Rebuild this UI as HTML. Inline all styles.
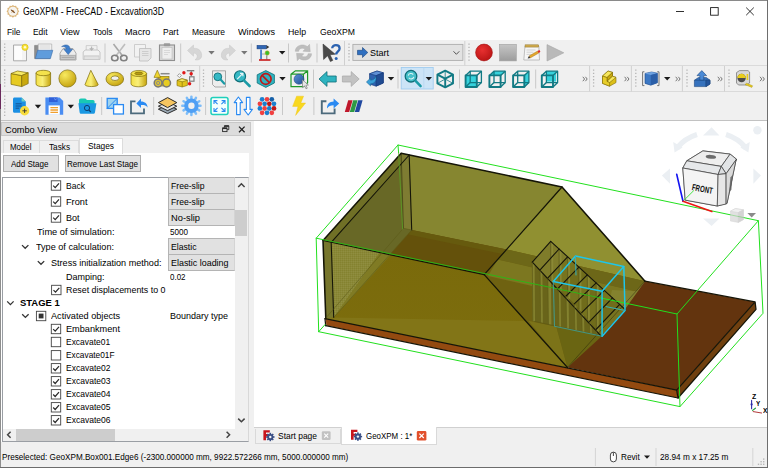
<!DOCTYPE html>
<html><head><meta charset="utf-8"><title>GeoXPM - FreeCAD - Excavation3D</title>
<style>
html,body{margin:0;padding:0;}
body{width:768px;height:468px;position:relative;overflow:hidden;background:#f0f0f0;font-family:"Liberation Sans",sans-serif;}
.a{position:absolute;box-sizing:border-box;}
.t{position:absolute;white-space:nowrap;transform-origin:0 50%;line-height:14px;height:14px;font-family:"Liberation Sans",sans-serif;}
svg{position:absolute;left:0;top:0;overflow:visible;}
</style></head><body>
<!-- window frame / title / menu -->
<div class="a" style="left:0;top:0;width:768px;height:40px;background:#fff;"></div>
<div class="a" style="left:0;top:0;width:768px;height:1px;background:#8a8a8a;"></div>
<!-- toolbar row separators -->
<div class="a" style="left:0;top:65px;width:768px;height:1px;background:#dadada;"></div>
<div class="a" style="left:0;top:91px;width:768px;height:1px;background:#dadada;"></div>
<div class="a" style="left:0;top:120px;width:768px;height:1px;background:#c2c2c2;"></div>
<!-- combo view dock -->
<div class="a" style="left:1px;top:122px;width:250px;height:14px;background:#dcdcdc;border:1px solid #c8c8c8;"></div>
<!-- tab widget -->
<div class="a" style="left:3px;top:140px;width:37px;height:13px;background:#f0f0f0;border:1px solid #dcdcdc;border-bottom:none;"></div>
<div class="a" style="left:40px;top:140px;width:39px;height:13px;background:#f0f0f0;border:1px solid #dcdcdc;border-left:none;border-bottom:none;"></div>
<div class="a" style="left:1px;top:153px;width:248px;height:289px;background:#fff;"></div>
<div class="a" style="left:79px;top:138px;width:44px;height:16px;background:#fff;border:1px solid #dcdcdc;border-bottom:none;"></div>
<!-- buttons -->
<div class="a" style="left:3px;top:155px;width:56px;height:17px;background:#e1e1e1;border:1px solid #adadad;"></div>
<div class="a" style="left:65px;top:155px;width:76px;height:17px;background:#e1e1e1;border:1px solid #adadad;"></div>
<!-- tree frame -->
<div class="a" style="left:2px;top:177px;width:247px;height:265px;background:#fff;border:1px solid #9a9ea4;border-right-color:#d8d8d8;"></div>
<!-- combos in tree -->
<div class="a" style="left:168px;top:177px;width:67px;height:17px;background:#e1e1e1;border:1px solid #b4b4b4;border-right-color:#d4d4d4;"></div>
<div class="a" style="left:168px;top:193px;width:67px;height:17px;background:#e1e1e1;border:1px solid #b4b4b4;border-right-color:#d4d4d4;"></div>
<div class="a" style="left:168px;top:209px;width:67px;height:17px;background:#e1e1e1;border:1px solid #b4b4b4;border-right-color:#d4d4d4;"></div>
<div class="a" style="left:168px;top:238px;width:67px;height:17px;background:#e1e1e1;border:1px solid #b4b4b4;border-right-color:#d4d4d4;"></div>
<div class="a" style="left:168px;top:254px;width:67px;height:17px;background:#e1e1e1;border:1px solid #b4b4b4;border-right-color:#d4d4d4;"></div>
<!-- v scrollbar -->
<div class="a" style="left:235px;top:178px;width:13px;height:251px;background:#f0f0f0;"></div>
<div class="a" style="left:235px;top:210px;width:12px;height:26px;background:#cdcdcd;"></div>
<!-- h scrollbar -->
<div class="a" style="left:3px;top:429px;width:232px;height:12px;background:#f0f0f0;"></div>
<div class="a" style="left:16px;top:429px;width:99px;height:12px;background:#cdcdcd;"></div>
<div class="a" style="left:235px;top:429px;width:13px;height:12px;background:#f0f0f0;"></div>
<!-- 3D view -->
<div class="a" style="left:254px;top:121px;width:513px;height:306px;background:#fff;"></div>
<!-- mdi tabs -->
<div class="a" style="left:254px;top:427px;width:514px;height:1px;background:#d0d0d0;"></div>
<div class="a" style="left:255px;top:429px;width:86px;height:15px;background:#f0f0f0;border:1px solid #d9d9d9;border-top:none;"></div>
<div class="a" style="left:341px;top:427px;width:96px;height:18px;background:#fff;border:1px solid #d9d9d9;border-top:none;"></div>
<!-- right window border -->
<div class="a" style="left:767px;top:0;width:1px;height:468px;background:#6e6e6e;"></div>
<div class="a" style="left:0;top:0;width:1px;height:468px;background:#8e8e8e;"></div>
<div class="a" style="left:0;top:84px;width:1px;height:25px;background:#6a2a5c;"></div>
<div class="a" style="left:0;top:467px;width:768px;height:1px;background:#6c6c6c;"></div>
<!--SVG3D--><svg width="768" height="468" viewBox="0 0 768 468">
<defs><pattern id="stp" width="2" height="2" patternUnits="userSpaceOnUse"><rect width="2" height="2" fill="#8a8838"/><rect width="1" height="1" fill="#84822f"/><rect x="1" y="1" width="1" height="1" fill="#908e40"/></pattern><linearGradient id="gfl" x1="0" y1="0" x2="0" y2="1"><stop offset="0" stop-color="#7a6a0b"/><stop offset="1" stop-color="#7d6e0e"/></linearGradient></defs>
<g stroke-linejoin="round" stroke-linecap="round">
<!-- brown slab -->
<polygon points="325.8,318.7 676.7,390.2 678,398 326.3,325.6" fill="#934a10"/>
<polygon points="676.7,390.2 755.1,301.9 756,309.4 678,398" fill="#70400f"/>
<polygon points="567.5,367.5 645,281.2 755.1,301.9 676.7,390.2" fill="#63340e"/>
<polygon points="323,240.5 401.2,153.2 562,187 645,281.2 567.5,367.5 325.8,318.7" fill="#7c761c"/>
<polygon points="331.2,242.3 409.2,155 562,187 484.2,274.7" fill="#77702a"/>
<!-- embankment: top face regions -->
<polygon points="323,240.5 401.2,153.2 409.2,155 331.2,242.5" fill="#707026"/>
<polygon points="331.2,242.3 409.2,155 411.7,230 390.3,254" fill="#686826"/>
<polygon points="409.2,155 562,187 506.6,249.4 411.7,230" fill="#868630"/>
<polygon points="401.2,153.2 409.2,155 411.7,230 403.4,228.3" fill="#7e7c32"/>
<polygon points="411.7,230 506.6,249.4 484.2,274.7 390.3,254" fill="#64510b"/>
<polygon points="411.7,230 506.6,249.4 502.4,254 408.4,234.6" fill="#665a0e"/>
<!-- front face regions -->
<polygon points="323,240.5 331.2,242.3 333.7,317.5 325.8,318.7" fill="#77762c"/>
<polygon points="331.2,242.3 380,252.3 333.7,317.5" fill="url(#stp)"/>
<polygon points="380,252.3 391,254.6 333.7,317.5" fill="#807b24"/>
<polygon points="391,254.6 484.2,274.7 567.5,367.5 325.8,318.7 333.7,317.5" fill="url(#gfl)"/>
<polygon points="333.7,317.5 534,321.3 567.5,367.5 325.8,318.7" fill="#827517"/>
<!-- slope face -->
<polygon points="562,187 645,281.2 506.6,249.4" fill="#909031"/>
<polygon points="506.6,249.4 645,281.2 567.5,367.5 484.2,274.7" fill="#6f6211"/>
<polygon points="528.2,320.8 556.4,326.8 567.5,367.5" fill="#7c7318"/>
<polygon points="556.4,326.8 602,336 567.5,367.5" fill="#6a6512"/>
<polygon points="497.7,259.4 636,291.2 622,306.6 488,276" fill="#7c7720"/>
<polygon points="506.6,249.4 645,281.2 636,291.2 497.7,259.4" fill="#6d6718"/>
<polygon points="600.9,335.8 625,309.3 645,281.2 636,291.2 612,290 " fill="#84822e"/>
</g>
<g><polygon points="532.3,262.2 550.7,241.3 559.1,249.0 540.1,269.8" fill="#7f7c2a"/><polygon points="540.1,269.8 559.1,249.0 567.6,256.8 547.9,277.8" fill="#7f7c2a"/><polygon points="547.9,277.8 567.6,256.8 578.9,267.1 558.3,288.2" fill="#77741f"/><polygon points="558.3,288.2 578.9,267.1 587.3,274.8 566.1,296.0" fill="#706c1b"/><polygon points="566.1,296.0 587.3,274.8 596.2,282.9 574.3,303.8" fill="#77741f"/><polygon points="574.3,303.8 596.2,282.9 604.2,290.3 581.7,312.7" fill="#706c1b"/><polygon points="581.7,312.7 604.2,290.3 612.5,297.9 589.4,321.6" fill="#77741f"/><polygon points="589.4,321.6 612.5,297.9 619.7,304.4 596.0,329.5" fill="#706c1b"/><polygon points="596.0,329.5 619.7,304.4 625.0,309.3 600.9,335.8" fill="#77741f"/></g>
<g><polygon points="550.7,241.3 553.1,243.5 553.3,283.3 550.9,280.6" fill="#8f8d3a" fill-opacity="0.75"/><line x1="550.7" y1="241.3" x2="550.9" y2="280.6" stroke="#4e4a12" stroke-width="0.7" stroke-opacity="0.8"/><polygon points="559.1,249.0 561.5,251.2 561.7,291.7 559.3,289.0" fill="#8f8d3a" fill-opacity="0.75"/><line x1="559.1" y1="249.0" x2="559.3" y2="289.0" stroke="#4e4a12" stroke-width="0.7" stroke-opacity="0.8"/><polygon points="567.6,256.8 570.0,259.0 570.2,300.1 567.8,297.4" fill="#8f8d3a" fill-opacity="0.75"/><line x1="567.6" y1="256.8" x2="567.8" y2="297.4" stroke="#4e4a12" stroke-width="0.7" stroke-opacity="0.8"/><polygon points="578.9,267.1 581.3,269.3 581.5,312.2 579.1,309.5" fill="#8f8d3a" fill-opacity="0.75"/><line x1="578.9" y1="267.1" x2="579.1" y2="309.5" stroke="#4e4a12" stroke-width="0.7" stroke-opacity="0.8"/><polygon points="587.3,274.8 589.7,277.0 589.9,322.1 587.5,319.4" fill="#8f8d3a" fill-opacity="0.75"/><line x1="587.3" y1="274.8" x2="587.5" y2="319.4" stroke="#4e4a12" stroke-width="0.7" stroke-opacity="0.8"/><polygon points="596.2,282.9 598.6,285.1 598.8,332.8 596.4,330.1" fill="#8f8d3a" fill-opacity="0.75"/><line x1="596.2" y1="282.9" x2="596.4" y2="330.1" stroke="#4e4a12" stroke-width="0.7" stroke-opacity="0.8"/></g>
<g><polygon points="532.3,262.2 540.1,269.8 540.5,322.6 532.7,320.9" fill="#69641a"/><polygon points="532.3,262.2 534.6,264.5 535.0,321.4 532.7,320.9" fill="#84822f"/><polygon points="540.1,269.8 547.9,277.8 548.3,324.3 540.5,322.6" fill="#69641a"/><polygon points="540.1,269.8 542.4,272.2 542.8,323.1 540.5,322.6" fill="#84822f"/><polygon points="547.9,277.8 558.3,288.2 558.7,326.6 548.3,324.3" fill="#69641a"/><polygon points="547.9,277.8 551.0,280.9 551.4,325.0 548.3,324.3" fill="#84822f"/><polygon points="558.3,288.2 566.1,296.0 566.5,328.3 558.7,326.6" fill="#69641a"/><polygon points="558.3,288.2 560.6,290.5 561.0,327.1 558.7,326.6" fill="#84822f"/><polygon points="566.1,296.0 574.3,303.8 574.7,330.0 566.5,328.3" fill="#69641a"/><polygon points="566.1,296.0 568.6,298.3 569.0,328.8 566.5,328.3" fill="#84822f"/><polygon points="574.3,303.8 581.7,312.7 582.1,331.7 574.7,330.0" fill="#69641a"/><polygon points="574.3,303.8 576.5,306.5 576.9,330.5 574.7,330.0" fill="#84822f"/><polygon points="581.7,312.7 589.4,321.6 589.8,333.3 582.1,331.7" fill="#69641a"/><polygon points="581.7,312.7 584.0,315.4 584.4,332.2 582.1,331.7" fill="#84822f"/><polygon points="589.4,321.6 596.0,329.5 596.4,334.8 589.8,333.3" fill="#69641a"/><polygon points="589.4,321.6 591.4,324.0 591.8,333.8 589.8,333.3" fill="#84822f"/><polygon points="596.0,329.5 600.9,335.8 601.3,335.8 596.4,334.8" fill="#69641a"/><polygon points="596.0,329.5 597.5,331.4 597.9,335.1 596.4,334.8" fill="#84822f"/></g>
<g fill="none" stroke="#15150a" stroke-width="1.1" stroke-linecap="round"><line x1="532.3" y1="262.2" x2="550.7" y2="241.3"/><line x1="540.1" y1="269.8" x2="559.1" y2="249.0"/><line x1="547.9" y1="277.8" x2="567.6" y2="256.8"/><line x1="558.3" y1="288.2" x2="578.9" y2="267.1"/><line x1="566.1" y1="296.0" x2="587.3" y2="274.8"/><line x1="574.3" y1="303.8" x2="596.2" y2="282.9"/><line x1="581.7" y1="312.7" x2="604.2" y2="290.3"/><line x1="589.4" y1="321.6" x2="612.5" y2="297.9"/><line x1="596.0" y1="329.5" x2="619.7" y2="304.4"/><line x1="532.3" y1="262.2" x2="600.9" y2="335.8"/><line x1="550.7" y1="241.3" x2="625.0" y2="309.3"/></g>
<g fill="none" stroke="#5a5614" stroke-width="0.7" stroke-opacity="0.8"><line x1="532.3" y1="262.2" x2="532.9" y2="320.9"/><line x1="540.1" y1="269.8" x2="540.7" y2="322.6"/><line x1="547.9" y1="277.8" x2="548.5" y2="324.3"/><line x1="558.3" y1="288.2" x2="558.9" y2="326.6"/><line x1="566.1" y1="296.0" x2="566.7" y2="328.3"/><line x1="574.3" y1="303.8" x2="574.9" y2="330.0"/><line x1="581.7" y1="312.7" x2="582.3" y2="331.7"/><line x1="589.4" y1="321.6" x2="590.0" y2="333.3"/><line x1="596.0" y1="329.5" x2="596.6" y2="334.8"/><line x1="534" y1="321.3" x2="600.9" y2="335.8"/></g>
<!-- edges -->
<g fill="none" stroke="#151508" stroke-width="1.25" stroke-linecap="round" stroke-linejoin="round">
<line x1="401.2" y1="153.2" x2="403.4" y2="228.3" stroke="#4a4a18" stroke-width="0.9"/>
<polyline points="325.8,318.7 323,240.5 401.2,153.2 562,187 645,281.2" stroke-width="1.55"/>
<polyline points="323,240.5 484.2,274.7 567.5,367.5"/>
<line x1="484.2" y1="274.7" x2="562" y2="187"/>
<polyline points="333.7,317.5 331.2,242.3 409.2,155 411.7,230" stroke-width="1.1"/>
<line x1="325" y1="318.7" x2="676.7" y2="390.2"/>
<polyline points="645,281.2 755.1,301.9 756,309.4 678,398 676.7,390.2 755.1,301.9"/>
<line x1="325.7" y1="325.7" x2="678" y2="398"/>
<line x1="325" y1="318.7" x2="325.7" y2="325.7"/>
<line x1="567.5" y1="367.5" x2="645" y2="281.2" stroke-width="0.7" stroke-opacity="0.55"/>
</g>
<g fill="none" stroke="#5c5a18" stroke-width="0.8" stroke-opacity="0.7"><line x1="326" y1="317.8" x2="403.4" y2="228.3"/><line x1="333.7" y1="317.5" x2="411.7" y2="230"/><line x1="403.4" y1="228.3" x2="411.7" y2="230"/></g>
<!-- green bounding box -->
<g fill="none" stroke="#22e01e" stroke-width="1" stroke-linecap="round">
<polyline points="318.7,331.7 316.2,238.2 398,145 758.4,220.7 763,313.3 680,406.6 318.7,331.7"/>
<polyline points="316.2,238.2 323.5,239.7"/><polyline points="323.5,239.7 600,297.8" stroke="#2fb416"/><polyline points="600,297.8 677,314 758.4,220.7"/>
<line x1="677" y1="314" x2="680" y2="406.6"/>
<line x1="318.7" y1="331.7" x2="325" y2="324.6"/>
<line x1="398" y1="145" x2="398.6" y2="152.6"/><line x1="398.6" y1="152.6" x2="402.6" y2="229" stroke="#58a626" stroke-opacity="0.75"/>
</g>
<!-- cyan selection box -->
<g fill="none" stroke="#1ec6ea" stroke-width="1.5" stroke-linecap="round" stroke-linejoin="round">
<polyline points="553.3,281.5 602.1,291.2 602.1,336.3"/>
<polyline points="553.3,281.5 575.5,256.1 623.8,266.5 625,310.5 602.1,336.3"/>
<line x1="602.1" y1="291.2" x2="623.8" y2="266.5"/>
<polyline points="553.3,281.5 554.5,326.2 602.1,336.3" stroke="#3aa8a8" stroke-width="1.1" stroke-opacity="0.75"/>
<line x1="575.5" y1="256.1" x2="576" y2="275" stroke="#35b0b8" stroke-width="1"/>
<line x1="606" y1="306.6" x2="625" y2="310.5" stroke="#35b0b8" stroke-width="1"/>
</g>
</svg><!--/SVG3D-->
<!--SVGUI--><svg width="768" height="468" viewBox="0 0 768 468">
<defs>
<linearGradient id="gy" x1="0" y1="0" x2="1" y2="1"><stop offset="0" stop-color="#f6e65a"/><stop offset="1" stop-color="#c9a80e"/></linearGradient>
<linearGradient id="gyh" x1="0" y1="0" x2="1" y2="0"><stop offset="0" stop-color="#f3df45"/><stop offset="0.45" stop-color="#f9ef7a"/><stop offset="1" stop-color="#c6a40e"/></linearGradient>
<radialGradient id="gys" cx="0.35" cy="0.3" r="0.8"><stop offset="0" stop-color="#f8ea60"/><stop offset="1" stop-color="#c19d08"/></radialGradient>
<radialGradient id="gred" cx="0.4" cy="0.35" r="0.7"><stop offset="0" stop-color="#e83030"/><stop offset="1" stop-color="#b81414"/></radialGradient>
<linearGradient id="gbl" x1="0" y1="0" x2="1" y2="1"><stop offset="0" stop-color="#5b93d6"/><stop offset="1" stop-color="#1f4f95"/></linearGradient>
<linearGradient id="ggr" x1="0" y1="0" x2="0" y2="1"><stop offset="0" stop-color="#c6c6c6"/><stop offset="1" stop-color="#9c9c9c"/></linearGradient>
</defs>
<line x1="4.7" y1="43.5" x2="4.7" y2="62.5" stroke="#b4b4b4" stroke-width="1.3" stroke-dasharray="1.3,1.9"/>
<g><path d="M13.5,45 H26.5 V60.8 H13.5 Z" fill="#f4f4f4" stroke="#9a9a9a" stroke-width="0.8"/><path d="M14.5,46 H22 V59.8 H14.5Z" fill="#fdfdfd"/><circle cx="25" cy="47.3" r="3.1" fill="#f7e23a" stroke="#d6b800" stroke-width="0.6"/><circle cx="25" cy="47.3" r="1.2" fill="#fffbd0"/></g>
<g><path d="M34.6,45.4 H40.5 L42,47 H50 V58.6 H34.6Z" fill="#8e8e8e" stroke="#6a6a6a" stroke-width="0.5"/><path d="M38.2,44 H51.7 V54 H38.2Z" fill="#f2f2f2" stroke="#a4a4a4" stroke-width="0.6"/><path d="M39.6,46 h10.6 M39.6,48 h10.6" stroke="#d2d2d2" stroke-width="0.8"/><path d="M35.4,58.6 L37.6,50.3 H52.8 L50.4,58.6Z" fill="#5f9cdc" stroke="#3a6fae" stroke-width="0.6"/></g>
<g><path d="M60,53.2 L63,48.6 H73 L76,53.2 V60 H60Z" fill="#ececec" stroke="#999" stroke-width="0.8"/><rect x="60.4" y="55.2" width="15.2" height="4.4" fill="#c8c8c8" stroke="#999" stroke-width="0.6"/><path d="M61.6,57.4 h12.8" stroke="#a8a8a8" stroke-width="1"/><path d="M61.6,46.6 C65.5,43.6 70.2,44.8 70,49.2 H72.6 L68.2,54.6 L63.8,49.2 H66.4 C66.4,47.4 64.4,46.2 61.6,46.6Z" fill="#3f7fcb" stroke="#2a5c9e" stroke-width="0.5"/></g>
<g><path d="M86.2,45.6 H97 V51.6 H86.2Z" fill="#f0f0f0" stroke="#c0c0c0" stroke-width="0.7"/><path d="M83.2,52 L85.2,50 H98 L100,52 V59.4 H83.2Z" fill="#f2f2f2" stroke="#bababa" stroke-width="0.8"/><path d="M84,55.6 h15.2" stroke="#cfcfcf" stroke-width="0.8"/><rect x="84.2" y="56.6" width="14.8" height="2.8" fill="#e2e2e2" stroke="#c2c2c2" stroke-width="0.5"/><path d="M91.6,46.6 v3.2 M89.8,48.2 l1.8,2 l1.8,-2" stroke="#b4b4b4" fill="none" stroke-width="1.1"/></g>
<line x1="105" y1="43.5" x2="105" y2="62.5" stroke="#c8c8c8" stroke-width="1"/>
<g fill="none" stroke="#808080"><path d="M113.5,44 L123,56.5" stroke="#a8a8a8" stroke-width="1.6"/><path d="M125,44 L115.5,56.5" stroke="#bdbdbd" stroke-width="1.6"/><ellipse cx="114.8" cy="58" rx="3.2" ry="2.7" stroke-width="1.6"/><ellipse cx="123.8" cy="58" rx="3.2" ry="2.7" stroke-width="1.6"/></g>
<g><path d="M134.5,44.5 H145.5 V57 H134.5Z" fill="#f2f2f2" stroke="#c4c4c4" stroke-width="0.8"/><path d="M139.5,48.5 H151 V58 L148,61 H139.5Z" fill="#e6e6e6" stroke="#bcbcbc" stroke-width="0.8"/><path d="M142,51.5 h6.5 M142,53.5 h6.5 M142,55.5 h6.5" stroke="#c6c6c6" stroke-width="0.8"/></g>
<g><rect x="159.5" y="45" width="15" height="15.5" fill="#d9d9d9" stroke="#8f8f8f" stroke-width="1.1"/><rect x="162" y="47.5" width="10" height="11.5" fill="#eeeeee" stroke="#b5b5b5" stroke-width="0.5"/><rect x="163.8" y="43.3" width="6.4" height="3" rx="0.8" fill="#9a9a9a"/><path d="M164,50.5 h6 M164,52.5 h6 M164,54.5 h4" stroke="#cfcfcf" stroke-width="0.7"/></g>
<line x1="180.7" y1="43.5" x2="180.7" y2="62.5" stroke="#c8c8c8" stroke-width="1"/>
<path d="M187.5,50.5 L193.5,45 V48.3 C199,48 202.5,51.5 201.5,57 C200.5,59.5 198,60.5 195,59.8 C198,58 198.5,53.5 193.5,53 V56.2Z" fill="#d6d6d6" stroke="#c6c6c6" stroke-width="0.5"/>
<polygon points="208.3,51.0 214.7,51.0 211.5,54.6" fill="#777"/>
<path d="M235.5,50.5 L229.5,45 V48.3 C224,48 220.5,51.5 221.5,57 C222.5,59.5 225,60.5 228,59.8 C225,58 224.5,53.5 229.5,53 V56.2Z" fill="#d6d6d6" stroke="#c6c6c6" stroke-width="0.5"/>
<polygon points="241.10000000000002,51.0 247.5,51.0 244.3,54.6" fill="#777"/>
<line x1="251.3" y1="43.5" x2="251.3" y2="62.5" stroke="#c8c8c8" stroke-width="1"/>
<g><rect x="257" y="45.3" width="9.5" height="3.6" fill="#2f66b5" stroke="#1b3f7a" stroke-width="0.5"/><path d="M266.5,45.3 L269.3,47.1 L266.5,48.9Z" fill="#333"/><rect x="260.2" y="49.5" width="1.7" height="10" fill="#3a76c8"/><circle cx="267.2" cy="53" r="2.2" fill="#36c02c" stroke="#e0a020" stroke-width="0.5"/><path d="M266.8,55.3 v4.2" stroke="#777" stroke-width="1"/><path d="M259,60 h11.5" stroke="#c81818" stroke-width="1.6"/><path d="M262,54 h3" stroke="#999" stroke-width="0.8"/></g>
<polygon points="279.0,51.0 285.4,51.0 282.2,54.6" fill="#1a1a1a"/>
<line x1="288.5" y1="43.5" x2="288.5" y2="62.5" stroke="#c8c8c8" stroke-width="1"/>
<g fill="#bdbdbd" stroke="#b0b0b0" stroke-width="0.4" transform="translate(303.4 52.5) scale(1.18) translate(-303.4 -52.5)"><path d="M296.5,51.5 C296.5,46.5 303,44.5 306.8,47.5 L308.6,45.6 L309.2,51.8 L303,51.4 L304.8,49.6 C302.6,48 299.6,49 299.4,51.5Z"/><path d="M310.3,53.5 C310.3,58.5 303.8,60.5 300,57.5 L298.2,59.4 L297.6,53.2 L303.8,53.6 L302,55.4 C304.2,57 307.2,56 307.4,53.5Z"/></g>
<line x1="317" y1="43.5" x2="317" y2="62.5" stroke="#c8c8c8" stroke-width="1"/>
<g><path d="M323,44 L323.6,59.5 L327.6,55.8 L330.4,61.6 L332.8,60.4 L330,54.8 L335.2,54.2Z" fill="#4a4a4a" stroke="#2e2e2e" stroke-width="0.5"/><path d="M332.2,48.2 C332.2,44.2 339.6,44.2 339.6,48.4 C339.6,51.4 336.2,51.2 336.2,54.6" fill="none" stroke="#2b62b0" stroke-width="2.3"/><circle cx="336.2" cy="58.6" r="1.5" fill="#2b62b0"/></g>
<line x1="344.5" y1="41" x2="344.5" y2="65.5" stroke="#d0d0d0" stroke-width="1"/>
<line x1="349" y1="43.5" x2="349" y2="62.5" stroke="#b4b4b4" stroke-width="1.3" stroke-dasharray="1.3,1.9"/>
<rect x="352.9" y="44.4" width="110" height="16" fill="#e2e2e2" stroke="#adadad" stroke-width="0.9"/>
<path d="M357.5,50.3 H362.5 V47.5 L367.8,52.5 L362.5,57.5 V54.7 H357.5Z" fill="#2f6fc0" stroke="#17437e" stroke-width="0.6"/>
<polyline points="453.5,51.3 456.4,54.3 459.3,51.3" fill="none" stroke="#444" stroke-width="0.9"/>
<line x1="464.8" y1="41" x2="464.8" y2="65.5" stroke="#d0d0d0" stroke-width="1"/>
<line x1="469" y1="43.5" x2="469" y2="62.5" stroke="#b4b4b4" stroke-width="1.3" stroke-dasharray="1.3,1.9"/>
<circle cx="484" cy="52.5" r="8.4" fill="url(#gred)" stroke="#a41010" stroke-width="0.6"/>
<rect x="499.5" y="44.3" width="16.8" height="16.6" fill="url(#ggr)" stroke="#a2a2a2" stroke-width="0.6"/>
<g><path d="M525,46 H538.8 L539.5,60 H523.8Z" fill="#f6f6f6" stroke="#a8a8a8" stroke-width="0.7"/><rect x="525" y="44.8" width="13.8" height="2.3" fill="#caa64a" stroke="#8d7430" stroke-width="0.4"/><path d="M526.5,50 h9 M526.5,52.2 h7 M526.5,54.4 h5" stroke="#c4c4c4" stroke-width="0.7"/><path d="M529,56 L537.6,51 L538.8,53 L530.2,58Z" fill="#e3a72c" stroke="#9a6a14" stroke-width="0.4"/><path d="M537.6,51 L539.4,50 L540.4,51.8 L538.8,53Z" fill="#e02828"/><path d="M529,56 L530.2,58 L527.6,58.4Z" fill="#333"/></g>
<path d="M547,44.6 L563.8,52.8 L547,61Z" fill="#b9b9b9" stroke="#a6a6a6" stroke-width="0.6"/>
<line x1="4.7" y1="69.5" x2="4.7" y2="88.5" stroke="#b4b4b4" stroke-width="1.3" stroke-dasharray="1.3,1.9"/>
<g stroke="#7d6a08" stroke-width="0.7" stroke-linejoin="round"><path d="M11,73.5 L21.7,75.6 L21.7,86.6 L11,84.3Z" fill="#e6ca22"/><path d="M11,73.5 L17.5,71 L28.2,72.8 L21.7,75.6Z" fill="#f7ea66"/><path d="M21.7,75.6 L28.2,72.8 L28.2,83.6 L21.7,86.6Z" fill="#c9a90f"/></g>
<g stroke="#7d6a08" stroke-width="0.7"><path d="M36,73 V84 C36,87.6 50.6,87.6 50.6,84 V73Z" fill="url(#gyh)"/><ellipse cx="43.3" cy="73" rx="7.3" ry="2.7" fill="#f4e24c"/></g>
<circle cx="67.5" cy="78.5" r="8.6" fill="url(#gys)" stroke="#7d6a08" stroke-width="0.7"/>
<path d="M90.8,70.3 L98.2,84.6 C98.2,87.2 85,87.2 85,84.6Z" fill="url(#gyh)" stroke="#7d6a08" stroke-width="0.7"/>
<g stroke="#7d6a08" stroke-width="0.7"><ellipse cx="114.8" cy="79" rx="8.8" ry="6.8" fill="url(#gys)"/><ellipse cx="115" cy="78.2" rx="4" ry="2.3" fill="#f0f0f0"/></g>
<g stroke="#7d6a08" stroke-width="0.7"><path d="M131,73.5 V83.8 C131,87.8 146.6,87.8 146.6,83.8 V73.5Z" fill="url(#gyh)"/><ellipse cx="138.8" cy="73.5" rx="7.8" ry="3" fill="#f4e24c"/><ellipse cx="138.8" cy="73.5" rx="4" ry="1.4" fill="#b79a10"/></g>
<g stroke-width="0.6"><rect x="158" y="76.4" width="11" height="9.6" fill="#e2c41c" stroke="#7d6a08"/><path d="M157.3,70.2 L160.6,77.4 H154Z" fill="#efd630" stroke="#7d6a08"/><path d="M160.6,73.7 h9" stroke="#8a8a8a" stroke-width="1.5"/><circle cx="158.1" cy="83" r="3.9" fill="#d9c238" stroke="#787878" stroke-width="1.5"/><circle cx="158.1" cy="83" r="1.6" fill="none" stroke="#8a8a8a" stroke-width="0.9"/><circle cx="166.6" cy="83" r="3.9" fill="#e8cc20" stroke="#787878" stroke-width="1.5"/></g>
<g stroke-width="0.6"><path d="M177,80.4 L182,78.7 L187.4,80.2 L187.4,85.4 L182.2,87 L177,85.6Z" fill="#e2c41c" stroke="#7d6a08"/><path d="M177,80.4 L182,78.7 L187.4,80.2 L182.2,81.8Z" fill="#f8ec6c" stroke="#7d6a08"/><path d="M182.2,81.8 V87" stroke="#7d6a08"/><path d="M186.8,70.7 h7.5" stroke="#808080" stroke-width="1.4"/><path d="M191.3,71 V76.6" stroke="#808080" stroke-width="1.1"/><rect x="189.6" y="76.8" width="4.4" height="4.4" fill="#f4f4f4" stroke="#808080" stroke-width="1.2"/><circle cx="183.9" cy="72.8" r="1.7" fill="#e01818"/><circle cx="191.2" cy="73.8" r="1.7" fill="#e01818"/><circle cx="189.6" cy="83.7" r="1.7" fill="#e01818"/><path d="M177.4,75.6 l2,-2 l2,2 l-2,2Z" fill="#f4f4f4" stroke="#8a8a8a" stroke-width="0.8"/></g>
<line x1="199.7" y1="66" x2="199.7" y2="91.5" stroke="#d0d0d0" stroke-width="1"/>
<line x1="203.5" y1="69.5" x2="203.5" y2="88.5" stroke="#b4b4b4" stroke-width="1.3" stroke-dasharray="1.3,1.9"/>
<g><path d="M212.5,70.8 H225.5 V87 H215 L212.5,84.5Z" fill="#ededed" stroke="#8a8a8a" stroke-width="0.7"/><circle cx="217.8" cy="76.8" r="3.9" fill="#35b8c4" stroke="#0f6e78" stroke-width="0.9"/><path d="M220.6,79.6 L224.2,83.6" stroke="#1a9aa6" stroke-width="2.2" stroke-linecap="round"/></g>
<g><circle cx="240" cy="76.3" r="5.6" fill="#35b8c4" stroke="#0f6e78" stroke-width="1.1"/><path d="M244.2,80.6 L249.6,86" stroke="#1a9aa6" stroke-width="2.6" stroke-linecap="round"/><path d="M237.2,79.2 L242.6,73.6 M240,73.4 h2.9 v2.9" stroke="#e8f4f6" stroke-width="1.2" fill="none"/></g>
<g><path d="M265.8,70.6 L274.4,74.8 V83 L265.8,87.4 L257.2,83 V74.8Z" fill="#2fb4c0" stroke="#0f6e78" stroke-width="0.8"/><circle cx="265.8" cy="79" r="5.3" fill="none" stroke="#c01818" stroke-width="1.7"/><path d="M262.2,75.4 L269.4,82.6" stroke="#c01818" stroke-width="1.7"/></g>
<polygon points="279.3,77.0 285.7,77.0 282.5,80.6" fill="#1a1a1a"/>
<g><path d="M291,74.2 L295.4,70.8 H307.6 V82.8 L303.4,86.6 H291Z M291,74.2 H303.4 V86.6 M303.4,74.2 L307.6,70.8" fill="none" stroke="#1f9a2a" stroke-width="1.2"/><circle cx="299" cy="79.3" r="5" fill="url(#gbl)" stroke="#173f7c" stroke-width="0.5"/><path d="M302.2,79.6 L302.6,87.6 L304.6,85.9 L306,88.8 L307.3,88.2 L305.9,85.3 L308.4,85Z" fill="#e8e8e8" stroke="#555" stroke-width="0.5"/></g>
<line x1="313.5" y1="69.5" x2="313.5" y2="88.5" stroke="#c8c8c8" stroke-width="1"/>
<path d="M319,79 L327,71.6 V76 H336.2 V82 H327 V86.4Z" fill="#2fb4c0" stroke="#0f6e78" stroke-width="0.8"/>
<path d="M359.2,79 L351.2,71.6 V76 H342.4 V82 H351.2 V86.4Z" fill="#c2c2c2" stroke="#a8a8a8" stroke-width="0.7"/>
<g stroke="#17397a" stroke-width="0.6"><path d="M369.5,73.8 L377,71 L383.3,72.8 L383.3,83 L376,86.2 L369.5,84Z" fill="#2f62b0"/><path d="M369.5,73.8 L377,71 L383.3,72.8 L376.2,75.6Z" fill="#5e8fd4"/><path d="M376.2,75.6 L383.3,72.8 V83 L376,86.2Z" fill="#214c92"/><path d="M366.4,82 L370.6,78 V80.2 C373.6,80 375.4,78.4 375.6,76 C377.2,80.2 374.6,83.8 370.6,83.8 V86Z" fill="#3aa0d8" stroke="#155a8a" stroke-width="0.5"/></g>
<polygon points="387.8,77.0 394.2,77.0 391,80.6" fill="#1a1a1a"/>
<line x1="398" y1="69.5" x2="398" y2="88.5" stroke="#c8c8c8" stroke-width="1"/>
<rect x="401.2" y="67.4" width="32" height="21.6" fill="#cce4f7" stroke="#99c9ef" stroke-width="0.8"/><line x1="423.8" y1="67.5" x2="423.8" y2="89" stroke="#b6d6f0" stroke-width="0.8"/>
<g><circle cx="411" cy="76.2" r="5.8" fill="#46c0ca" stroke="#0f6e78" stroke-width="1.3"/><path d="M415.6,80.9 L420.6,86.2" stroke="#1a9aa6" stroke-width="2.5" stroke-linecap="round"/><path d="M408.2,75.6 C408.6,73.2 412,72.8 413.2,74.6 M413.8,76.8 C413.4,79.2 410,79.6 408.8,77.8" stroke="#d8f2f4" stroke-width="1.1" fill="none"/></g>
<polygon points="425.6,77.0 432.0,77.0 428.8,80.6" fill="#1a1a1a"/>
<g fill="none" stroke="#127a84" stroke-width="1.9" stroke-linejoin="round"><path d="M445.2,70.6 L453,74.6 V83.4 L445.2,87.4 L437.4,83.4 V74.6Z"/><path d="M437.4,74.6 L445.2,78.6 L453,74.6 M445.2,78.6 V87.4" /><path d="M445.2,70.6 V79 M437.4,83.4 L445.2,79 L453,83.4" stroke-width="0.8"/></g>
<line x1="459.5" y1="69.5" x2="459.5" y2="88.5" stroke="#c8c8c8" stroke-width="1"/>
<g><rect x="465.6" y="75.4" width="11.199999999999989" height="11.599999999999994" fill="#36d2dc"/><g fill="none" stroke="#127a84" stroke-width="1.9" stroke-linejoin="round"><rect x="470.2" y="71.2" width="11.200000000000045" height="11.400000000000006" stroke-width="1.3"/><rect x="465.6" y="75.4" width="11.199999999999989" height="11.599999999999994"/><path d="M465.6,75.4 L470.2,71.2 M476.8,75.4 L481.40000000000003,71.2 M476.8,87.0 L481.40000000000003,82.60000000000001 M465.6,87.0 L470.2,82.60000000000001" stroke-width="1.4"/></g></g>
<g><polygon points="489.40000000000003,75.4 494.0,71.2 505.20000000000005,71.2 500.6,75.4" fill="#36d2dc"/><g fill="none" stroke="#127a84" stroke-width="1.9" stroke-linejoin="round"><rect x="494.0" y="71.2" width="11.200000000000045" height="11.400000000000006" stroke-width="1.3"/><rect x="489.40000000000003" y="75.4" width="11.199999999999989" height="11.599999999999994"/><path d="M489.40000000000003,75.4 L494.0,71.2 M500.6,75.4 L505.20000000000005,71.2 M500.6,87.0 L505.20000000000005,82.60000000000001 M489.40000000000003,87.0 L494.0,82.60000000000001" stroke-width="1.4"/></g></g>
<g><polygon points="524.3,75.4 528.9,71.2 528.9,82.60000000000001 524.3,87.0" fill="#36d2dc"/><g fill="none" stroke="#127a84" stroke-width="1.9" stroke-linejoin="round"><rect x="517.6999999999999" y="71.2" width="11.200000000000045" height="11.400000000000006" stroke-width="1.3"/><rect x="513.0999999999999" y="75.4" width="11.200000000000045" height="11.599999999999994"/><path d="M513.0999999999999,75.4 L517.6999999999999,71.2 M524.3,75.4 L528.9,71.2 M524.3,87.0 L528.9,82.60000000000001 M513.0999999999999,87.0 L517.6999999999999,82.60000000000001" stroke-width="1.4"/></g></g>
<line x1="535.7" y1="69.5" x2="535.7" y2="88.5" stroke="#c8c8c8" stroke-width="1"/>
<g><rect x="546.4" y="71.2" width="9.700000000000045" height="10.400000000000006" fill="#36d2dc"/><g fill="none" stroke="#127a84" stroke-width="1.9" stroke-linejoin="round"><rect x="546.4" y="71.2" width="11.200000000000045" height="11.400000000000006" stroke-width="1.3"/><rect x="541.8" y="75.4" width="11.200000000000045" height="11.599999999999994"/><path d="M541.8,75.4 L546.4,71.2 M553.0,75.4 L557.6,71.2 M553.0,87.0 L557.6,82.60000000000001 M541.8,87.0 L546.4,82.60000000000001" stroke-width="1.4"/></g></g>
<g fill="none" stroke="#555" stroke-width="0.8"><polyline points="582.8,76.8 584.6,79 582.8,81.2"/><polyline points="585.4,76.8 587.2,79 585.4,81.2"/></g>
<line x1="589.6" y1="66" x2="589.6" y2="91.5" stroke="#d0d0d0" stroke-width="1"/>
<line x1="593.6" y1="69.5" x2="593.6" y2="88.5" stroke="#b4b4b4" stroke-width="1.3" stroke-dasharray="1.3,1.9"/>
<g stroke="#7d6a08" stroke-width="0.6" stroke-linejoin="round"><path d="M602.5,76 L608,71 L612.5,72.4 V76.2 L616,77.4 V82.6 L609.6,86.2 L602.5,83.4Z" fill="#dcbf18"/><path d="M602.5,76 L608,71 L612.5,72.4 L607,77.6Z" fill="#f6e75e"/><path d="M607,77.6 L612.5,72.4 V76.2 L607,81.4Z" fill="#c9a90f"/><path d="M607,81.4 L612.5,76.2 L616,77.4 L609.6,82.6Z" fill="#f6e75e"/><path d="M602.5,76 L607,77.6 V81.4 L609.6,82.6 V86.2 L602.5,83.4Z" fill="#e8ce2a"/></g>
<g fill="none" stroke="#555" stroke-width="0.8"><polyline points="624.5999999999999,76.8 626.4,79 624.5999999999999,81.2"/><polyline points="627.1999999999999,76.8 629.0,79 627.1999999999999,81.2"/></g>
<line x1="631.4" y1="66" x2="631.4" y2="91.5" stroke="#d0d0d0" stroke-width="1"/>
<line x1="635.8" y1="69.5" x2="635.8" y2="88.5" stroke="#b4b4b4" stroke-width="1.3" stroke-dasharray="1.3,1.9"/>
<g><path d="M645,73.4 L651.6,72 L657.4,73.2 V82.8 L650.8,85.2 L645,83.4Z" fill="#3c78c4" stroke="#1d4a8c" stroke-width="0.6"/><path d="M645,73.4 L651.6,72 L657.4,73.2 L650.8,75Z" fill="#6ea2e0"/><path d="M650.8,75 L657.4,73.2 V82.8 L650.8,85.2Z" fill="#2a5ea8"/><path d="M644.4,71.8 H642.6 V85.6 H644.4 M657.2,71.8 H659 V85.6 H657.2" fill="none" stroke="#666" stroke-width="0.9"/></g>
<polygon points="664.0,77.0 670.4000000000001,77.0 667.2,80.6" fill="#1a1a1a"/>
<g fill="none" stroke="#555" stroke-width="0.8"><polyline points="675.6999999999999,76.8 677.5,79 675.6999999999999,81.2"/><polyline points="678.3,76.8 680.1,79 678.3,81.2"/></g>
<line x1="682.4" y1="66" x2="682.4" y2="91.5" stroke="#d0d0d0" stroke-width="1"/>
<line x1="687" y1="69.5" x2="687" y2="88.5" stroke="#b4b4b4" stroke-width="1.3" stroke-dasharray="1.3,1.9"/>
<g stroke="#1c4680" stroke-width="0.6" stroke-linejoin="round"><path d="M694.4,80.2 L698.4,77.6 H706.4 L710,80.2 V84 L706,86.6 H694.4Z" fill="#3672bd"/><path d="M694.4,80.2 H706 L710,80.2 M706,80.2 V86.6" fill="none"/><path d="M706,80.2 L710,80.2 V84 L706,86.6Z" fill="#24559c"/><path d="M699.8,80 V75.6 H697 L701.8,70.6 L706.6,75.6 H703.8 V80Z" fill="#4a8ad6"/></g>
<g fill="none" stroke="#555" stroke-width="0.8"><polyline points="717.8,76.8 719.6,79 717.8,81.2"/><polyline points="720.4,76.8 722.2,79 720.4,81.2"/></g>
<line x1="724.5" y1="66" x2="724.5" y2="91.5" stroke="#d0d0d0" stroke-width="1"/>
<line x1="729" y1="69.5" x2="729" y2="88.5" stroke="#b4b4b4" stroke-width="1.3" stroke-dasharray="1.3,1.9"/>
<g><path d="M736.5,72.6 L739.5,70.6 H748 L749.6,72 V83 L747,85 H738.5 L736.5,83Z" fill="#d8d8d8" stroke="#6e6e6e" stroke-width="0.7"/><circle cx="741.6" cy="78" r="4.2" fill="#4c4c4c"/><path d="M737.4,78 A4.2,4.2 0 0 1 745.8,78Z" fill="#e8cc1c"/><rect x="746.6" y="74" width="1.6" height="6" fill="#e8cc1c"/><path d="M745,84.6 L751.8,87.4 L752.6,85.8 L746.6,83.2Z" fill="#e8cc1c" stroke="#9a8410" stroke-width="0.4"/></g>
<g fill="none" stroke="#555" stroke-width="0.8"><polyline points="760.0,76.8 761.8000000000001,79 760.0,81.2"/><polyline points="762.6,76.8 764.4000000000001,79 762.6,81.2"/></g>
<line x1="4.7" y1="95.5" x2="4.7" y2="116.5" stroke="#b4b4b4" stroke-width="1.3" stroke-dasharray="1.3,1.9"/>
<g><path d="M14.6,97.4 H21.6 L25.8,101.6 V110.6 C25.8,112 25,112.8 23.6,112.8 H14.6 C13.4,112.8 13,112 13,111 V99 C13,98 13.6,97.4 14.6,97.4Z" fill="#1b8fe3"/><path d="M21.6,97.4 L25.8,101.6 H21.6Z" fill="#6ed0c8"/><path d="M15.6,103.8 h6 M15.6,106 h6 M15.6,108.2 h3.6" stroke="#154a86" stroke-width="0.9"/><circle cx="24.6" cy="110.8" r="4.7" fill="#f8dc3c"/><path d="M22.4,110.8 h4.4 M24.6,108.6 v4.4" stroke="#333" stroke-width="0.9"/></g>
<polygon points="34.8,104.80000000000001 41.2,104.80000000000001 38,108.4" fill="#1a1a1a"/>
<g><path d="M45.4,97.4 H59.6 L63.2,101 V114.8 H45.4Z" fill="#4a8df2"/><rect x="49" y="97.4" width="8.6" height="4.6" fill="#2f5fd8"/><path d="M54,98.4 l1.6,1.4 l1.4,-1.4" stroke="#9ec0ff" stroke-width="0.6" fill="none"/><rect x="48.6" y="105.4" width="11.2" height="9.4" fill="#fff"/><path d="M50.4,107.6 h7.6 M50.4,110 h7.6 M50.4,112.4 h7.6" stroke="#f0a030" stroke-width="1.3"/></g>
<polygon points="67.6,104.80000000000001 74.0,104.80000000000001 70.8,108.4" fill="#1a1a1a"/>
<g><path d="M79,100.6 C79,99.2 79.6,98.4 81,98.4 H85.4 L87,100 H93 C94,100 94.6,100.8 94.6,101.6 V104 H79Z" fill="#18c8b4"/><path d="M78.4,103.2 H96.4 L95,112.2 C94.8,113.2 94.2,113.8 93,113.8 H81.4 C80.2,113.8 79.8,113.2 79.6,112.2Z" fill="#1a98e2"/><circle cx="87" cy="108" r="2.6" fill="none" stroke="#0e3e6e" stroke-width="1"/><path d="M88.8,110 L90.8,112" stroke="#0e3e6e" stroke-width="1.1"/></g>
<line x1="101.7" y1="97" x2="101.7" y2="115" stroke="#c8c8c8" stroke-width="1"/>
<g stroke="#2a8af2" stroke-width="1.3"><rect x="107.2" y="98.4" width="10" height="10" fill="#9fd3ee"/><path d="M107.2,108.4 L117.2,98.4" stroke-width="1"/><rect x="113.6" y="104.6" width="9.8" height="9.4" fill="#fff"/></g>
<g fill="none"><path d="M135.5,101.4 H131 V113.4 H144 V108.6" stroke="#4c6a7c" stroke-width="1.8"/><path d="M136.4,103.4 L141,98.4 V101.4 C145,101.4 147.4,103.6 147.6,107.4 C146,105.2 144,104.8 141,105 V108Z" fill="#2a8af2" stroke="none"/></g>
<line x1="153.7" y1="97" x2="153.7" y2="115" stroke="#c8c8c8" stroke-width="1"/>
<g stroke="#2a2a2a" stroke-width="1" stroke-linejoin="round"><path d="M158.4,109.2 L167.6,104.8 L176.8,109.2 L167.6,113.6Z" fill="#9aa8b4"/><path d="M158.4,106.2 L167.6,101.8 L176.8,106.2 L167.6,110.6Z" fill="#e4e4e4"/><path d="M158.4,102.6 L167.6,97.6 L176.8,102.6 L167.6,107.6Z" fill="#f6c560"/></g>
<g><g stroke="#7cbcf8" stroke-width="2.5" stroke-linecap="round"><line x1="197.40" y1="105.80" x2="200.50" y2="105.80"/><line x1="196.60" y1="108.80" x2="199.28" y2="110.35"/><line x1="194.40" y1="111.00" x2="195.95" y2="113.68"/><line x1="191.40" y1="111.80" x2="191.40" y2="114.90"/><line x1="188.40" y1="111.00" x2="186.85" y2="113.68"/><line x1="186.20" y1="108.80" x2="183.52" y2="110.35"/><line x1="185.40" y1="105.80" x2="182.30" y2="105.80"/><line x1="186.20" y1="102.80" x2="183.52" y2="101.25"/><line x1="188.40" y1="100.60" x2="186.85" y2="97.92"/><line x1="191.40" y1="99.80" x2="191.40" y2="96.70"/><line x1="194.40" y1="100.60" x2="195.95" y2="97.92"/><line x1="196.60" y1="102.80" x2="199.28" y2="101.25"/></g><circle cx="191.4" cy="105.8" r="7.2" fill="#4f9ff4"/><circle cx="191.4" cy="105.8" r="3.2" fill="#f0f0f0"/></g>
<line x1="205.6" y1="97" x2="205.6" y2="115" stroke="#c8c8c8" stroke-width="1"/>
<g><rect x="211" y="97.6" width="17" height="16.8" rx="2" fill="#f4fffd" stroke="#1fd0bc" stroke-width="1.5"/><g stroke="#2a8af2" stroke-width="1.1" fill="none"><path d="M214,104 v-3.4 h3.4 M214.2,100.8 l3.4,3.4"/><path d="M225,104 v-3.4 h-3.4 M224.8,100.8 l-3.4,3.4"/><path d="M214,108 v3.4 h3.4 M214.2,111.2 l3.4,-3.4"/><path d="M225,108 v3.4 h-3.4 M224.8,111.2 l-3.4,-3.4"/></g></g>
<g fill="#fff" stroke="#2a8af2" stroke-width="1.1" stroke-linejoin="round"><path d="M238.4,97 L242.6,102.6 H240.2 V114.6 H236.6 V102.6 H234.2Z"/><path d="M248.2,115 L252.4,109.4 H250 V97.4 H246.4 V109.4 H244Z"/></g>
<g><circle cx="262.1" cy="99.3" r="2.35" fill="#1a7fd0"/><circle cx="267" cy="99.3" r="2.35" fill="#f04040"/><circle cx="271.8" cy="99.3" r="2.35" fill="#1660a8"/><circle cx="259.9" cy="103.8" r="2.35" fill="#f04040"/><circle cx="264.6" cy="103.8" r="2.35" fill="#1a7fd0"/><circle cx="269.3" cy="103.8" r="2.35" fill="#c01818"/><circle cx="274" cy="103.8" r="2.35" fill="#1a7fd0"/><circle cx="259.9" cy="108.4" r="2.35" fill="#1a7fd0"/><circle cx="264.6" cy="108.4" r="2.35" fill="#f04040"/><circle cx="269.3" cy="108.4" r="2.35" fill="#1a7fd0"/><circle cx="274" cy="108.4" r="2.35" fill="#c01818"/><circle cx="262.1" cy="112.8" r="2.35" fill="#f04040"/><circle cx="267" cy="112.8" r="2.35" fill="#1a7fd0"/><circle cx="271.8" cy="112.8" r="2.35" fill="#f04040"/></g>
<line x1="282.5" y1="97" x2="282.5" y2="115" stroke="#c8c8c8" stroke-width="1"/>
<path d="M296.6,96.2 H303.6 L300.8,103 H305.6 L295.6,115.4 L298,106.4 H292.6Z" fill="#f8d820" stroke="#f0c010" stroke-width="0.4"/>
<line x1="313.9" y1="97" x2="313.9" y2="115" stroke="#c8c8c8" stroke-width="1"/>
<g fill="none"><path d="M326.4,101.2 H321.8 V113.4 H334.6 V108.4" stroke="#4c6a7c" stroke-width="1.9"/><path d="M327,108.6 C327,103.6 329.6,101.6 333.6,101.4 V98.4 L339.2,103.4 L333.6,108.4 V105.2 C330.6,105.2 328.6,106 327,108.6Z" fill="#2a8af2"/></g>
<g><path d="M348.2,100.2 H352.6 L349.2,112 H344.8Z" fill="#c0182c"/><path d="M353.2,100.2 H357.6 L354.2,112 H349.8Z" fill="#2e9a44"/><path d="M358.2,100.2 H362.6 L359.2,112 H354.8Z" fill="#2048a0"/></g>
<g fill="none" stroke="#2a2a2a" stroke-width="0.9"><rect x="222.6" y="128" width="4.4" height="3.6"/><path d="M222.6,128.3 h4.4" stroke-width="1.5"/><path d="M224.4,127.6 V125.8 H228.8 V129.6 H227.2"/><path d="M224.4,126.1 h4.4" stroke-width="1.5"/></g>
<path d="M239,126.6 L244.6,132.2 M244.6,126.6 L239,132.2" stroke="#222" stroke-width="1.3"/>
<rect x="51.3" y="180.8" width="9.4" height="9.4" fill="#fff" stroke="#444" stroke-width="0.9"/>
<polyline points="53.199999999999996,185.70000000000002 55.199999999999996,187.70000000000002 59.0,183.3" fill="none" stroke="#2a2a2a" stroke-width="1.2"/>
<rect x="51.3" y="196.8" width="9.4" height="9.4" fill="#fff" stroke="#444" stroke-width="0.9"/>
<polyline points="53.199999999999996,201.70000000000002 55.199999999999996,203.70000000000002 59.0,199.3" fill="none" stroke="#2a2a2a" stroke-width="1.2"/>
<rect x="51.3" y="212.8" width="9.4" height="9.4" fill="#fff" stroke="#444" stroke-width="0.9"/>
<polyline points="53.199999999999996,217.70000000000002 55.199999999999996,219.70000000000002 59.0,215.3" fill="none" stroke="#2a2a2a" stroke-width="1.2"/>
<rect x="51.6" y="285.3" width="9.4" height="9.4" fill="#fff" stroke="#444" stroke-width="0.9"/>
<polyline points="53.5,290.2 55.5,292.2 59.300000000000004,287.8" fill="none" stroke="#2a2a2a" stroke-width="1.2"/>
<rect x="36.4" y="311.3" width="9.4" height="9.4" fill="#fff" stroke="#444" stroke-width="0.9"/>
<rect x="38.699999999999996" y="313.6" width="4.8" height="4.8" fill="#333"/>
<rect x="51.3" y="324.3" width="9.4" height="9.4" fill="#fff" stroke="#444" stroke-width="0.9"/>
<polyline points="53.199999999999996,329.2 55.199999999999996,331.2 59.0,326.8" fill="none" stroke="#2a2a2a" stroke-width="1.2"/>
<rect x="51.3" y="337.3" width="9.4" height="9.4" fill="#fff" stroke="#444" stroke-width="0.9"/>
<rect x="51.3" y="350.6" width="9.4" height="9.4" fill="#fff" stroke="#444" stroke-width="0.9"/>
<rect x="51.3" y="363.6" width="9.4" height="9.4" fill="#fff" stroke="#444" stroke-width="0.9"/>
<polyline points="53.199999999999996,368.5 55.199999999999996,370.5 59.0,366.1" fill="none" stroke="#2a2a2a" stroke-width="1.2"/>
<rect x="51.3" y="376.6" width="9.4" height="9.4" fill="#fff" stroke="#444" stroke-width="0.9"/>
<polyline points="53.199999999999996,381.5 55.199999999999996,383.5 59.0,379.1" fill="none" stroke="#2a2a2a" stroke-width="1.2"/>
<rect x="51.3" y="389.6" width="9.4" height="9.4" fill="#fff" stroke="#444" stroke-width="0.9"/>
<polyline points="53.199999999999996,394.5 55.199999999999996,396.5 59.0,392.1" fill="none" stroke="#2a2a2a" stroke-width="1.2"/>
<rect x="51.3" y="402.6" width="9.4" height="9.4" fill="#fff" stroke="#444" stroke-width="0.9"/>
<polyline points="53.199999999999996,407.5 55.199999999999996,409.5 59.0,405.1" fill="none" stroke="#2a2a2a" stroke-width="1.2"/>
<rect x="51.3" y="415.6" width="9.4" height="9.4" fill="#fff" stroke="#444" stroke-width="0.9"/>
<polyline points="53.199999999999996,420.5 55.199999999999996,422.5 59.0,418.1" fill="none" stroke="#2a2a2a" stroke-width="1.2"/>
<polyline points="22.0,245.1 25.2,248.29999999999998 28.4,245.1" fill="none" stroke="#333" stroke-width="1.3"/>
<polyline points="37.8,261.09999999999997 41,264.3 44.2,261.09999999999997" fill="none" stroke="#333" stroke-width="1.3"/>
<polyline points="7.2,301.4 10.4,304.6 13.600000000000001,301.4" fill="none" stroke="#333" stroke-width="1.3"/>
<polyline points="22.2,314.2 25.4,317.40000000000003 28.599999999999998,314.2" fill="none" stroke="#333" stroke-width="1.3"/>
<polyline points="238.2,187 241.4,183.8 244.6,187" fill="none" stroke="#444" stroke-width="1.5"/>
<polyline points="238.2,418.6 241.4,421.8 244.6,418.6" fill="none" stroke="#444" stroke-width="1.5"/>
<polyline points="10.6,431.8 7.6,434.8 10.6,437.8" fill="none" stroke="#444" stroke-width="1.5"/>
<polyline points="226.6,431.8 229.6,434.8 226.6,437.8" fill="none" stroke="#444" stroke-width="1.5"/>
<g><path d="M263.4,430.2 H269.79999999999995 V432.4 H266.0 V434.09999999999997 H268.79999999999995 V436.2 H266.0 V440.2 H263.4Z" fill="#c8141c"/><circle cx="270.29999999999995" cy="437.0" r="3.1" fill="#3a4f86"/><circle cx="270.29999999999995" cy="437.0" r="1.1" fill="#f0f0f0"/><rect x="269.49999999999994" y="432.8" width="1.6" height="8.4" fill="#3a4f86" transform="rotate(0 270.29999999999995 437.0)"/><rect x="269.49999999999994" y="432.8" width="1.6" height="8.4" fill="#3a4f86" transform="rotate(45 270.29999999999995 437.0)"/><rect x="269.49999999999994" y="432.8" width="1.6" height="8.4" fill="#3a4f86" transform="rotate(90 270.29999999999995 437.0)"/><rect x="269.49999999999994" y="432.8" width="1.6" height="8.4" fill="#3a4f86" transform="rotate(135 270.29999999999995 437.0)"/><circle cx="270.29999999999995" cy="437.0" r="1.2" fill="#f4f4f4"/></g>
<g><path d="M351,429.8 H357.4 V432.0 H353.6 V433.7 H356.4 V435.8 H353.6 V439.8 H351Z" fill="#c8141c"/><circle cx="357.9" cy="436.6" r="3.1" fill="#3a4f86"/><circle cx="357.9" cy="436.6" r="1.1" fill="#f0f0f0"/><rect x="357.09999999999997" y="432.40000000000003" width="1.6" height="8.4" fill="#3a4f86" transform="rotate(0 357.9 436.6)"/><rect x="357.09999999999997" y="432.40000000000003" width="1.6" height="8.4" fill="#3a4f86" transform="rotate(45 357.9 436.6)"/><rect x="357.09999999999997" y="432.40000000000003" width="1.6" height="8.4" fill="#3a4f86" transform="rotate(90 357.9 436.6)"/><rect x="357.09999999999997" y="432.40000000000003" width="1.6" height="8.4" fill="#3a4f86" transform="rotate(135 357.9 436.6)"/><circle cx="357.9" cy="436.6" r="1.2" fill="#f4f4f4"/></g>
<rect x="321.8" y="431.2" width="8.8" height="8.8" rx="1.2" fill="#c2c2c2"/><path d="M324.2,433.6 l4,4 M328.2,433.6 l-4,4" stroke="#fff" stroke-width="1.1"/>
<rect x="416.8" y="431" width="9.6" height="9.6" rx="1.4" fill="#e2502c"/><path d="M419.4,433.6 l4.4,4.4 M423.8,433.6 l-4.4,4.4" stroke="#fff" stroke-width="1.2"/>
<line x1="595.4" y1="448" x2="595.4" y2="466" stroke="#d4d4d4"/><line x1="656" y1="448" x2="656" y2="466" stroke="#d4d4d4"/><line x1="752.8" y1="448" x2="752.8" y2="466" stroke="#d4d4d4"/>
<g fill="none" stroke="#333" stroke-width="0.9"><rect x="610.4" y="452.2" width="6" height="9.6" rx="2.8" fill="#fff"/><path d="M613.4,452.4 V456"/></g>
<polygon points="644,455.4 650,455.4 647,458.8" fill="#1a1a1a"/>
<g fill="#b8b8b8"><rect x="763" y="461" width="1.4" height="1.4"/><rect x="763" y="463.6" width="1.4" height="1.4"/><rect x="760.4" y="463.6" width="1.4" height="1.4"/><rect x="757.8" y="463.6" width="1.4" height="1.4"/><rect x="760.4" y="461" width="1.4" height="1.4"/><rect x="763" y="458.4" width="1.4" height="1.4"/></g>
<g fill="#ebeff3"><polygon points="711.6,127.3 703,135.6 719.4,135.6"/><polygon points="661.9,175.5 670,168.4 670,183.7"/><polygon points="761,175.5 753.4,168.4 753.4,183.7"/><polygon points="711.6,226 703,218.4 719.4,218.4"/><circle cx="757.4" cy="130.2" r="4.2"/></g>
<g fill="none" stroke="#ebeff3" stroke-width="5.2"><path d="M697,134.6 A42,42 0 0 0 677,148"/><path d="M726,134.6 A42,42 0 0 1 746,148"/></g>
<g fill="#ebeff3"><polygon points="674.6,152.6 673.2,142 682.6,147.6"/><polygon points="748.4,152.6 749.8,142 740.4,147.6"/></g>
<g stroke="#3a3a3a" stroke-width="0.7" stroke-linejoin="round">
<path d="M682.8,168 L686.8,160.8 L702.9,150.9 L730.1,154.1 L736.5,159.2 L735.7,161.6 L727,203.4 L717.3,206 L685.2,200.1Z" fill="#e4e4e4"/>
<path d="M686.8,160.8 L702.9,150.9 L730.1,154.1 L721.3,166.4Z" fill="#eeeeee"/>
<path d="M682.8,168 L686.8,160.8 L721.3,166.4 L718.1,174.5Z" fill="#e6e8ea"/>
<path d="M721.3,166.4 L730.1,154.1 L736.5,159.2 L726.1,173.7Z" fill="#e2e4e6"/>
<path d="M721.3,166.4 L726.1,173.7 L718.1,174.5Z" fill="#dcdee0"/>
<path d="M682.8,168 L718.1,174.5 L717.3,206 L685.2,200.1Z" fill="#f4f4f4"/>
<path d="M718.1,174.5 L726.1,173.7 L726.1,204 L717.3,206Z" fill="#e6e6e6"/>
<path d="M726.1,173.7 L736.5,159.2 L735.7,161.6 L727,203.4 L726.1,204Z" fill="#dadada"/>
</g>
<ellipse cx="710.9" cy="156.8" rx="5.2" ry="1.9" fill="#555" opacity="0.85" transform="rotate(4 710.9 156.8)"/>
<path d="M730.4,177.5 L732.8,174.6 L731.4,189.4 L728.9,193.8Z" fill="#5e5e5e" opacity="0.8"/>
<g stroke-linecap="round"><line x1="683" y1="201.3" x2="693.6" y2="190.7" stroke="#30e030" stroke-width="0.9"/><line x1="683" y1="201.3" x2="676.7" y2="174.3" stroke="#1414f0" stroke-width="1.6"/><line x1="683" y1="201.3" x2="711.9" y2="211.4" stroke="#f01414" stroke-width="1.6"/></g>
<g opacity="0.72" stroke="#c4c4c4" stroke-width="0.5" stroke-linejoin="round"><path d="M730.4,211.2 L735.4,208.6 L743.4,209.8 L743.4,219.6 L738.2,222.4 L730.4,221Z" fill="#d6d6d6"/><path d="M730.4,211.2 L735.4,208.6 L743.4,209.8 L738.2,212.6Z" fill="#ebebeb"/><path d="M738.2,212.6 L743.4,209.8 V219.6 L738.2,222.4Z" fill="#c4c4c4"/></g>
<polygon points="747.4,213 756,213 751.7,217.6" fill="#8a8a8a"/>
<g stroke-linecap="round"><line x1="751.6" y1="400.4" x2="751.6" y2="408.8" stroke="#2c2ca8" stroke-width="1.1"/><line x1="753.2" y1="411.6" x2="761.6" y2="413" stroke="#a82424" stroke-width="0.9"/><line x1="752.6" y1="410.4" x2="755.4" y2="408.2" stroke="#24a040" stroke-width="1.2"/><circle cx="751.6" cy="404.4" r="1.1" fill="#2c2ca8"/></g>
<g><polygon points="19.3,11.3 18.1,12.7 18.4,14.5 16.7,15.1 16.1,16.8 14.3,16.5 12.9,17.7 11.5,16.5 9.7,16.8 9.1,15.1 7.4,14.5 7.7,12.7 6.5,11.3 7.7,9.9 7.4,8.1 9.1,7.5 9.7,5.8 11.5,6.1 12.9,4.9 14.3,6.1 16.1,5.8 16.7,7.5 18.4,8.1 18.1,9.9" fill="#dcb67a"/><circle cx="12.9" cy="11.3" r="4.5" fill="#f6f3ee"/><path d="M10.6,9.6 C12,9.6 14.6,11.4 15.2,13.2 C13.4,13 11.2,11.4 10.6,9.6Z" fill="#6a3c14"/><path d="M11.4,12.6 l2.6,-2.4" stroke="#c98a3a" stroke-width="0.6"/></g>
<g fill="none" stroke="#1a1a1a" stroke-width="0.9"><line x1="676" y1="11.5" x2="684" y2="11.5"/><rect x="710.6" y="7.6" width="7.6" height="7.6"/><path d="M746.2,7.6 L753.8,15.2 M753.8,7.6 L746.2,15.2"/></g>
</svg><!--/SVGUI-->
<span class="t" style="left:23px;top:4.50px;font-size:10.2px;color:#000;transform:scaleX(0.8558);">GeoXPM - FreeCAD - Excavation3D</span>
<span class="t" style="left:7px;top:24.50px;font-size:9.8px;color:#000;transform:scaleX(0.8546);">File</span>
<span class="t" style="left:33px;top:24.50px;font-size:9.8px;color:#000;transform:scaleX(0.8585);">Edit</span>
<span class="t" style="left:60px;top:24.50px;font-size:9.8px;color:#000;transform:scaleX(0.9258);">View</span>
<span class="t" style="left:92.5px;top:24.50px;font-size:9.8px;color:#000;transform:scaleX(0.8525);">Tools</span>
<span class="t" style="left:124.7px;top:24.50px;font-size:9.8px;color:#000;transform:scaleX(0.9290);">Macro</span>
<span class="t" style="left:163px;top:24.50px;font-size:9.8px;color:#000;transform:scaleX(0.8626);">Part</span>
<span class="t" style="left:192px;top:24.50px;font-size:9.8px;color:#000;transform:scaleX(0.8656);">Measure</span>
<span class="t" style="left:238px;top:24.50px;font-size:9.8px;color:#000;transform:scaleX(0.9308);">Windows</span>
<span class="t" style="left:288px;top:24.50px;font-size:9.8px;color:#000;transform:scaleX(0.8930);">Help</span>
<span class="t" style="left:319.5px;top:24.50px;font-size:9.8px;color:#000;transform:scaleX(0.8805);">GeoXPM</span>
<span class="t" style="left:370px;top:45.50px;font-size:9.8px;color:#000;transform:scaleX(0.9177);">Start</span>
<span class="t" style="left:5px;top:122.50px;font-size:9.8px;color:#000;transform:scaleX(0.9391);">Combo View</span>
<span class="t" style="left:9.5px;top:139.50px;font-size:9.8px;color:#000;transform:scaleX(0.8056);">Model</span>
<span class="t" style="left:49px;top:139.50px;font-size:9.8px;color:#000;transform:scaleX(0.8384);">Tasks</span>
<span class="t" style="left:88px;top:139.00px;font-size:9.8px;color:#000;transform:scaleX(0.8520);">Stages</span>
<span class="t" style="left:11.2px;top:156.70px;font-size:9.8px;color:#000;transform:scaleX(0.8194);">Add Stage</span>
<span class="t" style="left:67px;top:156.70px;font-size:9.8px;color:#000;transform:scaleX(0.8251);">Remove Last Stage</span>
<span class="t" style="left:65.7px;top:178.50px;font-size:9.8px;color:#000;transform:scaleX(0.8723);">Back</span>
<span class="t" style="left:171px;top:178.50px;font-size:9.8px;color:#000;transform:scaleX(0.8790);">Free-slip</span>
<span class="t" style="left:65.7px;top:194.50px;font-size:9.8px;color:#000;transform:scaleX(0.9399);">Front</span>
<span class="t" style="left:171px;top:194.50px;font-size:9.8px;color:#000;transform:scaleX(0.8790);">Free-slip</span>
<span class="t" style="left:65.7px;top:210.50px;font-size:9.8px;color:#000;transform:scaleX(0.9172);">Bot</span>
<span class="t" style="left:171px;top:210.50px;font-size:9.8px;color:#000;transform:scaleX(0.9508);">No-slip</span>
<span class="t" style="left:36.5px;top:225.00px;font-size:9.8px;color:#000;transform:scaleX(0.9467);">Time of simulation:</span>
<span class="t" style="left:170px;top:225.00px;font-size:9.8px;color:#000;transform:scaleX(0.8258);">5000</span>
<span class="t" style="left:36px;top:239.50px;font-size:9.8px;color:#000;transform:scaleX(0.9300);">Type of calculation:</span>
<span class="t" style="left:171px;top:239.50px;font-size:9.8px;color:#000;transform:scaleX(0.8836);">Elastic</span>
<span class="t" style="left:51px;top:255.50px;font-size:9.8px;color:#000;transform:scaleX(0.9265);">Stress initialization method:</span>
<span class="t" style="left:171px;top:255.50px;font-size:9.8px;color:#000;transform:scaleX(0.9100);">Elastic loading</span>
<span class="t" style="left:66px;top:270.00px;font-size:9.8px;color:#000;transform:scaleX(0.9180);">Damping:</span>
<span class="t" style="left:170px;top:270.00px;font-size:9.8px;color:#000;transform:scaleX(0.8124);">0.02</span>
<span class="t" style="left:66px;top:283.00px;font-size:9.8px;color:#000;transform:scaleX(0.9045);">Reset displacements to 0</span>
<span class="t" style="left:20px;top:296.00px;font-size:9.8px;color:#000;font-weight:bold;transform:scaleX(0.9635);">STAGE 1</span>
<span class="t" style="left:50.6px;top:309.00px;font-size:9.8px;color:#000;transform:scaleX(0.9343);">Activated objects</span>
<span class="t" style="left:170px;top:309.00px;font-size:9.8px;color:#000;transform:scaleX(0.9179);">Boundary type</span>
<span class="t" style="left:65.8px;top:322.00px;font-size:9.8px;color:#000;transform:scaleX(0.9353);">Embankment</span>
<span class="t" style="left:65.8px;top:335.00px;font-size:9.8px;color:#000;transform:scaleX(0.8632);">Excavate01</span>
<span class="t" style="left:65.8px;top:348.30px;font-size:9.8px;color:#000;transform:scaleX(0.8481);">Excavate01F</span>
<span class="t" style="left:65.8px;top:361.30px;font-size:9.8px;color:#000;transform:scaleX(0.8691);">Excavate02</span>
<span class="t" style="left:65.8px;top:374.30px;font-size:9.8px;color:#000;transform:scaleX(0.8691);">Excavate03</span>
<span class="t" style="left:65.8px;top:387.30px;font-size:9.8px;color:#000;transform:scaleX(0.8691);">Excavate04</span>
<span class="t" style="left:65.8px;top:400.30px;font-size:9.8px;color:#000;transform:scaleX(0.8691);">Excavate05</span>
<span class="t" style="left:65.8px;top:413.30px;font-size:9.8px;color:#000;transform:scaleX(0.8691);">Excavate06</span>
<span class="t" style="left:277.7px;top:428.50px;font-size:9.8px;color:#000;transform:scaleX(0.8625);">Start page</span>
<span class="t" style="left:366px;top:428.50px;font-size:9.8px;color:#000;transform:scaleX(0.8096);">GeoXPM : 1*</span>
<span class="t" style="left:2px;top:450.00px;font-size:9.6px;color:#000;transform:scaleX(0.8499);">Preselected: GeoXPM.Box001.Edge6 (-2300.000000 mm, 9922.572266 mm, 5000.000000 mm)</span>
<span class="t" style="left:621px;top:450.00px;font-size:9.8px;color:#000;transform:scaleX(0.8375);">Revit</span>
<span class="t" style="left:660.3px;top:450.00px;font-size:9.6px;color:#000;transform:scaleX(0.8607);">28.94 m x 17.25 m</span>
<span class="t" style="left:691.8px;top:180.00px;font-size:9px;color:#111;font-weight:bold;transform:rotate(11deg) scaleX(0.6839);">FRONT</span>
<span class="t" style="left:752.2px;top:390.40px;font-size:6.6px;color:#000;font-weight:bold;transform:scaleX(1.0419);">Z</span>
<span class="t" style="left:756.4px;top:397.40px;font-size:6.6px;color:#000;font-weight:bold;transform:scaleX(0.9532);">Y</span>
<span class="t" style="left:763px;top:403.60px;font-size:6.6px;color:#000;font-weight:bold;transform:scaleX(0.9986);">X</span>
</body></html>
